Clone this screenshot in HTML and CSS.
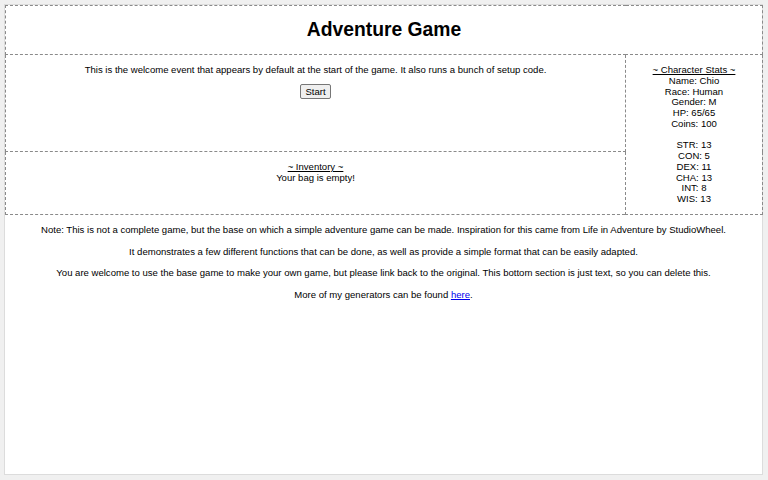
FILE: index.html
```html
<!DOCTYPE html>
<html lang="en">
  <head>
    <meta charset="UTF-8" />
    <meta name="viewport" content="width=device-width, initial-scale=1.0" />
    <title>Adventure Game</title>
    <link rel="stylesheet" href="styles.css">
  </head>
  <body>
    <div class="container">
      <table class="game-table">
        <colgroup>
          <col class="main-col">
          <col class="stats-col">
        </colgroup>
        <tr>
          <td colspan="2" class="title-cell"><h1>Adventure Game</h1></td>
        </tr>
        <tr>
          <td class="event-cell">
            <div id="event-text">This is the welcome event that appears by default at the start of the game. It also runs a bunch of setup code.</div>
            <button class="start-btn">Start</button>
          </td>
          <td rowspan="2" class="stats-cell">
            <u>~ Character Stats ~</u><br>
            Name: Chio<br>
            Race: Human<br>
            Gender: M<br>
            HP: 65/65<br>
            Coins: 100<br>
            <br>
            STR: 13<br>
            CON: 5<br>
            DEX: 11<br>
            CHA: 13<br>
            INT: 8<br>
            WIS: 13
          </td>
        </tr>
        <tr>
          <td class="inventory-cell">
            <u>~ Inventory ~</u><br>
            Your bag is empty!
          </td>
        </tr>
      </table>

      <!-- Bottom notes -->
      <div class="notes">
        <p>Note: This is not a complete game, but the base on which a simple adventure game can be made. Inspiration for this came from Life in Adventure by StudioWheel.</p>
        <p>It demonstrates a few different functions that can be done, as well as provide a simple format that can be easily adapted.</p>
        <p>You are welcome to use the base game to make your own game, but please link back to the original. This bottom section is just text, so you can delete this.</p>
        <p>More of my generators can be found <a href="#">here</a>.</p>
      </div>
    </div>
  </body>
</html>
```

FILE: styles.css
```css
body {
  margin: 0;
  padding: 4px;
  background-color: #f0f0f0;
  font-family: "Liberation Sans", Arial, sans-serif;
  font-size: 9.55px;
  color: #000;
}

.container {
  width: 757px;
  height: 469px;
  background: #fff;
  border: 1px solid #dcdcdc;
}

.game-table {
  width: 757px;
  border-collapse: collapse;
  table-layout: fixed;
}

.main-col {
  width: 620px;
}

.stats-col {
  width: 137px;
}

.game-table td {
  border: 1px dashed #8a8a8a;
  text-align: center;
  vertical-align: top;
  padding: 0;
  line-height: 10.75px;
}

.title-cell {
  height: 48px;
  vertical-align: middle !important;
}

h1 {
  margin: 0;
  font-size: 19.3px;
  line-height: 48px;
}

.event-cell {
  height: 86px;
  padding-top: 10px !important;
}

.start-btn {
  margin-top: 8px;
  font-family: "Liberation Sans", Arial, sans-serif;
  font-size: 9.55px;
  padding: 1px 4px;
  background: #efefef;
  border: 1px solid #767676;
  border-radius: 2px;
  color: #000;
}

.stats-cell {
  padding-top: 10px !important;
}

.inventory-cell {
  height: 52px;
  padding-top: 10px !important;
}

.notes {
  text-align: center;
}

.notes p {
  margin: 9px 0 10.7px;
  line-height: 11px;
}

.notes a {
  color: #0000ee;
}
```
